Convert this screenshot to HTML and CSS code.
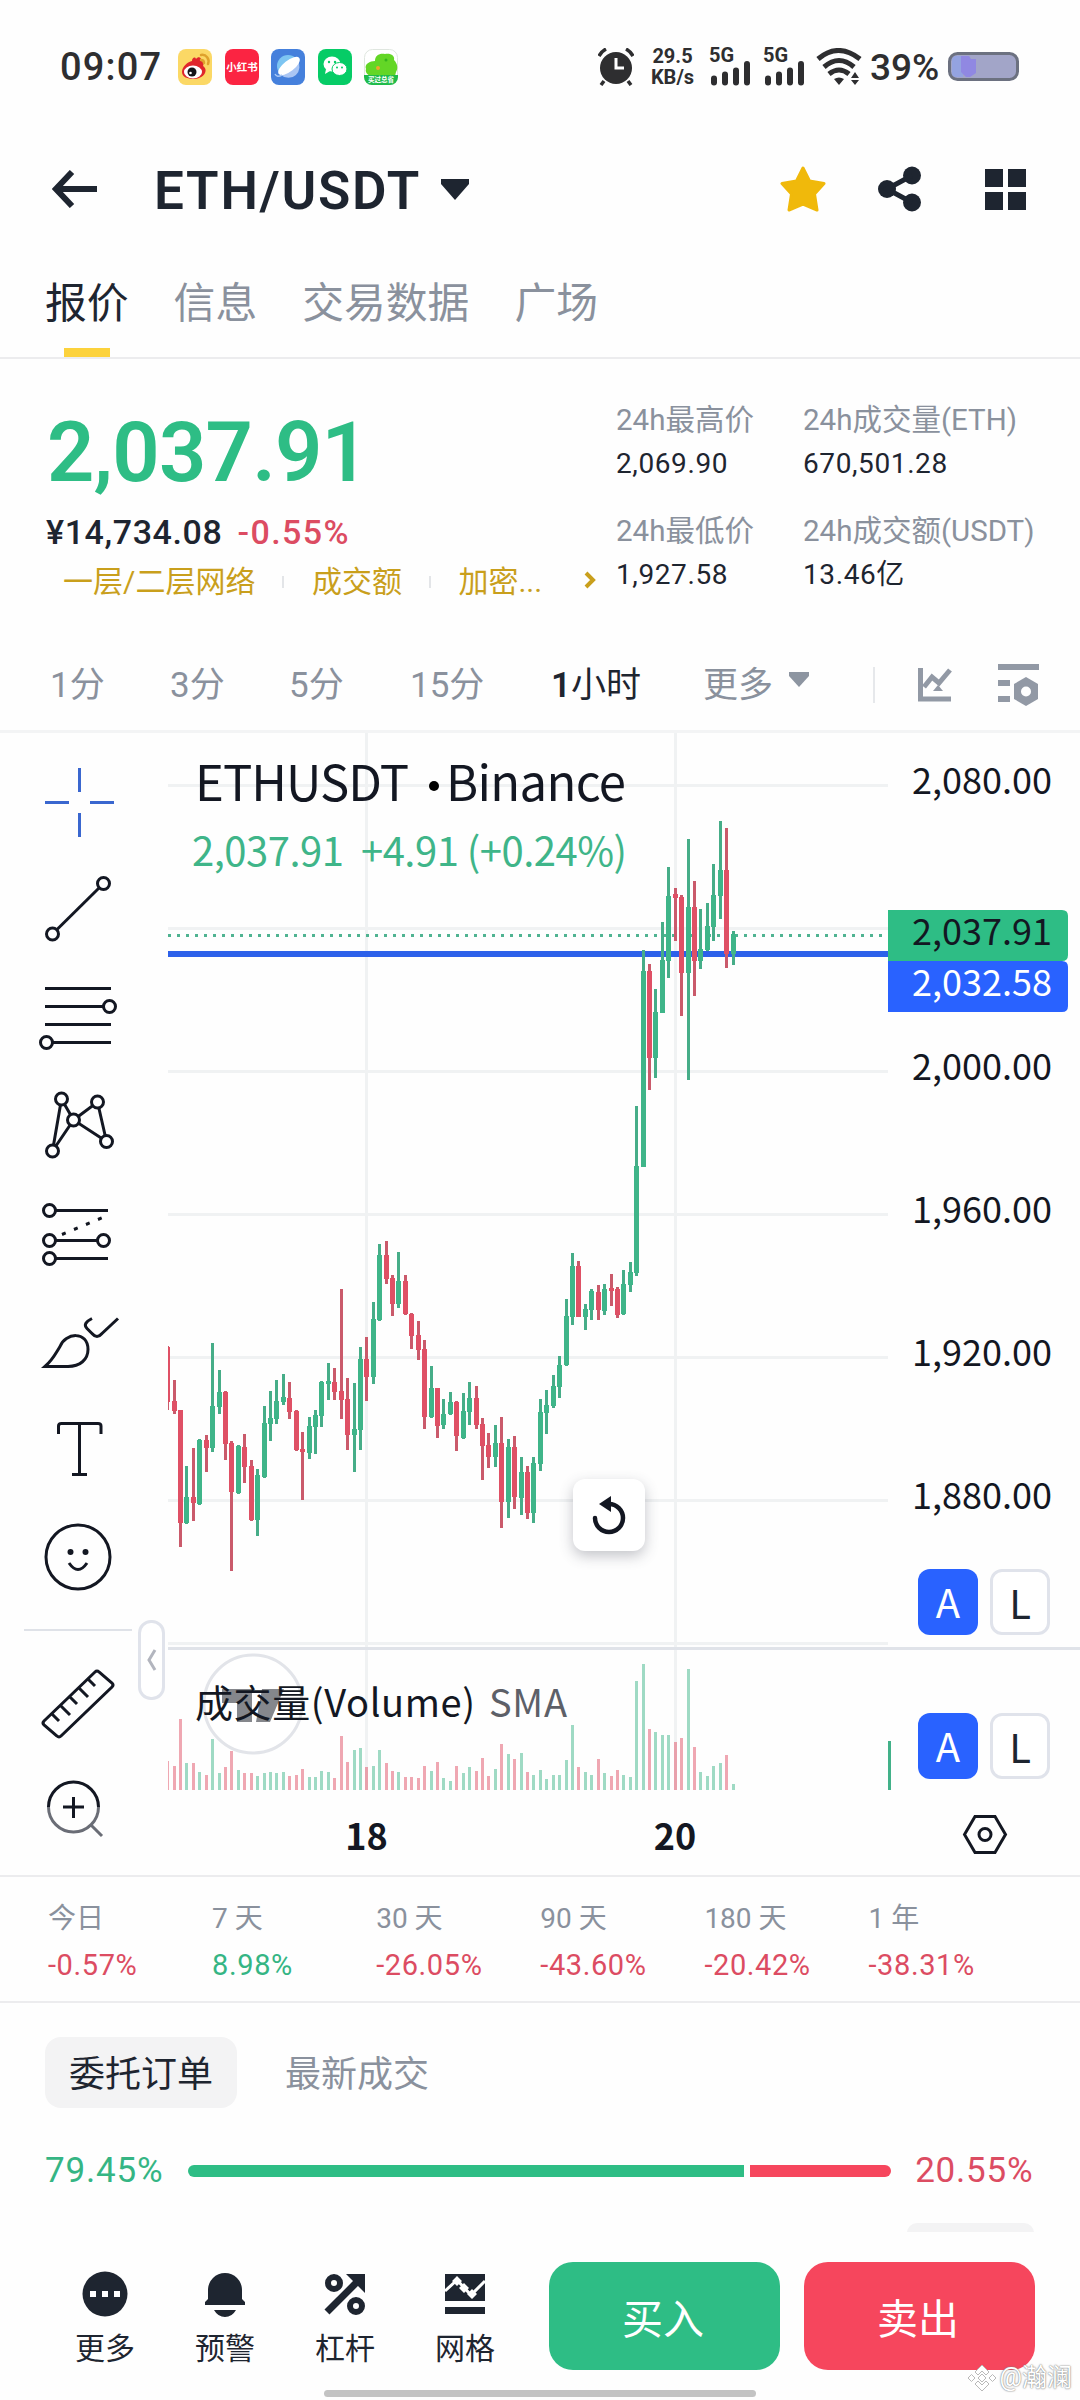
FILE: index.html
```html
<!DOCTYPE html>
<html lang="zh-CN">
  <head>
    <meta charset="UTF-8" />
    <meta name="viewport" content="width=device-width, initial-scale=1.0" />
    <title>ETH/USDT</title>
    <link rel="stylesheet" href="styles.css">
  </head>
  <body>
    <div class="status-bar">
      <span class="time">09:07</span>
      <div class="apps">
        <svg width="34" height="36" viewBox="0 0 34 36">
          <rect width="34" height="36" rx="8" fill="#fbd865" />
          <path d="M4 23c0-6 6-10 10-11 0-3 3-5 4-2 2-3 6-2 5 2 3 0 3 3 2 5 3 2 3 5 2 7-2 4-7 6-12 6S4 28 4 23z" fill="#e0262b" />
          <ellipse cx="15" cy="23" rx="9" ry="6.500" fill="#fff" />
          <circle cx="14" cy="23" r="4.500" fill="#16161a" />
          <circle cx="12.500" cy="24" r="1.300" fill="#fff" />
          <path d="M23 6c5-1 9 4 7 9M23 11c2 0 3 1 3 3" fill="none" stroke="#dfa22c" stroke-width="2.500" stroke-linecap="round" />
        </svg>
        <svg width="34" height="36" viewBox="0 0 34 36">
          <rect width="34" height="36" rx="8" fill="#fb2442" />
          <text x="17" y="22" class="app-text">小红书</text>
        </svg>
        <svg width="34" height="36" viewBox="0 0 34 36">
          <rect width="34" height="36" rx="8" fill="#4580dc" />
          <circle cx="17" cy="17" r="11" fill="#7dc5f2" />
          <path d="M26 11a11 11 0 0 1-16 15z" fill="#aac6f4" />
          <ellipse cx="18" cy="17" rx="13" ry="5.500" transform="rotate(-38 18 17)" fill="#fff" />
          <path d="M4 25q2 4 7 1" fill="none" stroke="#a9c8f5" stroke-width="1.500" />
        </svg>
        <svg width="34" height="36" viewBox="0 0 34 36">
          <rect width="34" height="36" rx="8" fill="#06cc66" />
          <ellipse cx="14" cy="15" rx="8.500" ry="7.500" fill="#fff" />
          <path d="M8 20l-1 5 5-3z" fill="#fff" />
          <ellipse cx="21.500" cy="20" rx="7.500" ry="6.500" fill="#fff" stroke="#06cc66" />
          <g fill="#06cc66">
            <circle cx="11" cy="13" r="1.200" />
            <circle cx="17" cy="13" r="1.200" />
            <circle cx="19" cy="18.500" r="1" />
            <circle cx="24" cy="18.500" r="1" />
          </g>
        </svg>
        <svg width="34" height="36" viewBox="0 0 34 36">
          <rect x=".5" y=".5" width="33" height="35" rx="8" fill="#fff" stroke="#dfe6df" />
          <path d="M2 20c-2-5 4-8 9-8 0-6 5-8 10-7 6-1 10 2 9 6 4 4 4 9 2 12l-1 4H6c-3-2-5-4-4-7z" fill="#63d626" />
          <path d="M0 26h34v2a8 8 0 0 1-8 8H8a8 8 0 0 1-8-8z" fill="#1fbb4a" />
          <circle cx="14" cy="19" r="2" fill="#f0a42e" />
          <circle cx="22" cy="11" r="1.500" fill="#35b51c" />
          <text x="17" y="33" class="app-text tiny">买过总省</text>
        </svg>
      </div>
      <svg class="alarm" width="36" height="38" viewBox="0 0 36 38">
        <circle cx="18" cy="20" r="16" fill="#2e2e30" />
        <path d="M18 10v10h8" fill="none" stroke="#fff" stroke-width="3" />
        <path d="M1 8q3-5 7-7M35 8q-3-5-7-7M6 33l-3 4M30 33l3 4" fill="none" stroke="#2e2e30" stroke-width="3.500" />
      </svg>
      <div class="speed"><b>29.5</b><b>KB/s</b></div>
      <div class="signal"><b>5G</b>
        <svg width="42" height="26" viewBox="0 0 42 26"><path d="M4 22.500v-4M15 22.500v-8M26 22.500v-12M37 22.500V4" stroke="#2e2e30" stroke-width="6" stroke-linecap="round" /></svg>
      </div>
      <div class="signal"><b>5G</b>
        <svg width="42" height="26" viewBox="0 0 42 26"><path d="M4 22.500v-4M15 22.500v-8M26 22.500v-12M37 22.500V4" stroke="#2e2e30" stroke-width="6" stroke-linecap="round" /></svg>
      </div>
      <svg class="wifi" width="46" height="38" viewBox="0 0 46 38">
        <path d="M2 11q20-17 42 0M8 19q15-13 30 0M13 26q10-8 20 0" fill="none" stroke="#2e2e30" stroke-width="5" />
        <path d="M18 31q5-3 10 0l-5 6zM35 30l4-6 4 6zM35 32h8l-4 5z" fill="#2e2e30" />
      </svg>
      <span class="percent">39%</span>
      <svg class="battery" width="71" height="30" viewBox="0 0 71 30">
        <rect x="1.500" y="1.500" width="68" height="26" rx="8" fill="#a2a5c8" stroke="#6c7180" stroke-width="3" />
        <path d="M4 7q1-3 4-3h7v21H8q-4 0-4-4z" fill="#94a3e0" />
        <path d="M13 4h8l2 3h5v14l-6 4h-4l-5-5z" fill="#9088e2" />
      </svg>
    </div>

    <header class="header">
      <svg class="back" width="46" height="38" viewBox="0 0 46 38">
        <path d="M20 2L4 19l16 17M4 19h41" fill="none" stroke="#1e2530" stroke-width="6" />
      </svg>
      <h1>ETH/USDT</h1>
      <svg class="caret" width="28" height="21" viewBox="0 0 28 21"><path d="M0 0h28v5L14 21 0 5z" fill="#1e2530" /></svg>
      <svg class="star" width="46" height="46" viewBox="0 0 46 46">
        <path d="M23 2l6.500 13L44 17.500 34.500 28 37 44l-14-6-14 6 2.500-16L2 17.500 16.500 15z" fill="#f0b90b" stroke="#f0b90b" stroke-width="3" stroke-linejoin="round" />
      </svg>
      <svg class="share" width="46" height="46" viewBox="0 0 46 46">
        <g fill="#1e2530"><circle cx="10" cy="23" r="9" /><circle cx="35" cy="9.500" r="9" /><circle cx="35" cy="36.500" r="9" /></g>
        <path d="M35 9.500L10 23l25 13.500" fill="none" stroke="#1e2530" stroke-width="5" />
      </svg>
      <svg width="41" height="41" viewBox="0 0 41 41"><path d="M0 0h18v18H0zM23 0h18v18H23zM0 23h18v18H0zM23 23h18v18H23z" fill="#1e2530" /></svg>
    </header>

    <nav class="tabs">
      <span class="active">报价</span>
      <span>信息</span>
      <span>交易数据</span>
      <span>广场</span>
    </nav>

    <section class="ticker">
      <div class="price-box">
        <div class="price">2,037.91</div>
        <div class="fiat"><span>¥14,734.08</span> <span class="down">-0.55%</span></div>
        <div class="tags">
          <span>一层/二层网络</span><i></i><span>成交额</span><i></i><span>加密...</span>
          <svg width="12" height="18" viewBox="0 0 12 18"><path d="M2 2l7 7-7 7" fill="none" stroke="#c99f1c" stroke-width="4" /></svg>
        </div>
      </div>
      <dl class="day-stats">
        <div><dt>24h最高价</dt><dd>2,069.90</dd></div>
        <div><dt>24h成交量(ETH)</dt><dd>670,501.28</dd></div>
        <div><dt>24h最低价</dt><dd>1,927.58</dd></div>
        <div><dt>24h成交额(USDT)</dt><dd>13.46亿</dd></div>
      </dl>
    </section>

    <nav class="frames">
      <span>1分</span>
      <span>3分</span>
      <span>5分</span>
      <span>15分</span>
      <span class="active"><b>1</b>小时</span>
      <span>更多 <svg width="20" height="15" viewBox="0 0 20 15"><path d="M0 0h20v4L10 15 0 4z" fill="#8d95a1" /></svg></span>
      <i></i>
      <svg width="34" height="34" viewBox="0 0 34 34">
        <path d="M2.500 0v31H33" fill="none" stroke="#9299a5" stroke-width="5" />
        <path d="M6 19l8-10 7 6L32 2" fill="none" stroke="#9299a5" stroke-width="5" />
        <path d="M15 23l5-6 5 6z" fill="#9299a5" />
      </svg>
      <svg width="42" height="44" viewBox="0 0 42 44">
        <path d="M0 4h41M0 20h12M0 36h12" stroke="#9299a5" stroke-width="6" />
        <path d="M28 14l12 7v15l-12 7-12-7V21z" fill="#9299a5" />
        <circle cx="28" cy="28.500" r="5" fill="#fff" />
      </svg>
    </nav>

    <main class="chart">
      <div class="tools">
        <svg viewBox="24 748 108 108"><path d="M79.500 768v24M79.500 813v24M45 802.500h24M90 802.500h24" /></svg>
        <svg viewBox="24 856 108 108"><path d="M57 929.500l42-41.500" /><circle cx="103.500" cy="883.500" r="6" /><circle cx="52.500" cy="934" r="6" /></svg>
        <svg viewBox="24 964 108 108"><path d="M45 988.500h66M45 1006.500h58M45 1024.500h66M52 1042.500h59" /><circle cx="109.500" cy="1006.500" r="6" /><circle cx="46.500" cy="1042.500" r="6" /></svg>
        <svg viewBox="24 1072 108 108">
          <path d="M61.500 1099l-9 52 21-31zM73.500 1120l24-18 9 39.500z" />
          <g fill="#fff"><circle cx="61.500" cy="1099" r="6" /><circle cx="97.500" cy="1102" r="6" /><circle cx="73.500" cy="1120" r="6" /><circle cx="106.500" cy="1141.500" r="6" /><circle cx="52.500" cy="1151" r="6" /></g>
        </svg>
        <svg viewBox="24 1180 108 108">
          <path d="M56 1210.500h52M56 1240.500h41M56 1258.500h52" /><path d="M62 1234.500l42-17.500" stroke-dasharray="4 9" />
          <circle cx="49.500" cy="1210.500" r="6" /><circle cx="49.500" cy="1240.500" r="6" /><circle cx="103.500" cy="1240.500" r="6" /><circle cx="49.500" cy="1258.500" r="6" />
        </svg>
        <svg viewBox="24 1288 108 108"><path d="M45 1366.500c8-7 10-12 15-20 5-14 28-16 28 3 0 10-8 17-20 17zM92 1318.500q-10 5-5 10l5 5q5 6 10 0l16-15" /></svg>
        <svg viewBox="24 1396 108 108"><path d="M58.500 1434v-8q0-2.500 3-2.500h36.500q3 0 3 2.500v8M79.500 1424v50.500M72 1474.500h15" /></svg>
        <svg viewBox="24 1504 108 108"><circle cx="78" cy="1557" r="32" /><path d="M69 1563q9 13 18 0" /><g fill="#131722" stroke="none"><circle cx="70.500" cy="1552" r="3" /><circle cx="85.500" cy="1552" r="3" /></g></svg>
        <hr>
        <svg viewBox="24 1650 108 108"><path d="M44 1721l51-49q2-2 4 0l13 11q2 2 0 4l-51 49q-2 2-4 0l-13-11q-2-2 0-4zM52 1714l7 7M61 1706l9 9M70 1697l7 7M79 1688l9 9M88 1679l7 7" /></svg>
        <svg viewBox="24 1758 108 108"><path d="M48.500 1807a25 25 0 0 1 50 0M63 1807h21M73.500 1797v21" /><path d="M48.500 1807a25 25 0 0 0 50 0M91 1825l11 11" stroke="#6a6d76" /></svg>
      </div>

      <div class="plot">
        <svg id="candles" width="912" height="1145" viewBox="168 730 912 1145">
          <g stroke="#f0f2f3" stroke-width="3">
            <path d="M168 785.500h720M168 928.500h720M168 1071.500h720M168 1214.500h720M168 1357.500h720M168 1500.500h720M168 1643.500h720" />
            <path d="M366.500 733v1057M675.500 733v1057" />
          </g>
          <circle cx="253" cy="1704" r="49" fill="#fff" fill-opacity=".6" stroke="#e2e4e9" stroke-width="3" />
          <path d="M222 1689h30v33h-15v-19h-15zM262 1689h22l-14 33h-14z" fill="#85878c" />
          <path d="M168 1648.500h912" stroke="#e0e3e9" stroke-width="3" />
          <path d="M168 935.500h720" stroke="#4fb391" stroke-width="3" stroke-dasharray="3 6" />
          <path d="M168 954h720" stroke="#2d61ea" stroke-width="6" />
          <g id="bars"></g>
          <path d="M889.500 1741v49" stroke="#42b189" stroke-width="3" />
          <path d="M888 910h174q6 0 6 6v39q0 6-6 6H888z" fill="#2ebd85" />
          <path d="M888 961h174q6 0 6 6v39q0 6-6 6H888z" fill="#2962ff" />
          <g class="axis">
            <text x="912" y="794">2,080.00</text>
            <text x="912" y="945">2,037.91</text>
            <text x="912" y="995.500" class="on-blue">2,032.58</text>
            <text x="912" y="1079.500">2,000.00</text>
            <text x="912" y="1222.500">1,960.00</text>
            <text x="912" y="1365.500">1,920.00</text>
            <text x="912" y="1508.500">1,880.00</text>
          </g>
          <g class="legend">
            <text x="195" y="801" textLength="214">ETHUSDT</text>
            <circle cx="434" cy="786" r="5" />
            <text x="446" y="801" textLength="180">Binance</text>
            <text x="192" y="866" class="change" textLength="152">2,037.91</text>
            <text x="361" y="866" class="change" textLength="266">+4.91 (+0.24%)</text>
            <text x="195" y="1717" class="volume" textLength="280">成交量(Volume)</text>
            <text x="489" y="1717" class="volume sma" textLength="78">SMA</text>
          </g>
          <g class="dates">
            <text x="366.500" y="1850">18</text>
            <text x="675" y="1850">20</text>
          </g>
          <path d="M975 1816.500h20l10.500 18-10.500 18h-20l-10.500-18z" fill="none" stroke="#131722" stroke-width="3" />
          <circle cx="985" cy="1834.500" r="6" fill="none" stroke="#131722" stroke-width="3" />
        </svg>
        <div class="scale-mode price-scale"><b>A</b><span>L</span></div>
        <div class="scale-mode volume-scale"><b>A</b><span>L</span></div>
        <div class="reset">
          <svg width="36" height="40" viewBox="0 0 36 40">
            <path d="M4 22a14 14 0 1 0 14-14" fill="none" stroke="#131722" stroke-width="4.500" stroke-linecap="round" />
            <path d="M8 8L20 0v16z" fill="#131722" />
          </svg>
        </div>
        <div class="collapse"><svg width="10" height="22" viewBox="0 0 10 22"><path d="M8 1L2 11l6 10" fill="none" stroke="#b2b5be" stroke-width="3" /></svg></div>
      </div>
    </main>

    <section class="periods">
      <div><span>今日</span><b class="down">-0.57%</b></div>
      <div><span>7 天</span><b class="up">8.98%</b></div>
      <div><span>30 天</span><b class="down">-26.05%</b></div>
      <div><span>90 天</span><b class="down">-43.60%</b></div>
      <div><span>180 天</span><b class="down">-20.42%</b></div>
      <div><span>1 年</span><b class="down">-38.31%</b></div>
    </section>

    <section class="orders">
      <div class="order-tabs">
        <span class="active">委托订单</span>
        <span>最新成交</span>
      </div>
      <div class="ratio">
        <span class="up">79.45%</span>
        <div class="ratio-bar"><i class="buy" style="width: 556px"></i><i class="sell"></i></div>
        <span class="down">20.55%</span>
      </div>
      <div class="precision"></div>
    </section>

    <footer class="bottom-bar">
      <div class="action">
        <svg width="46" height="46" viewBox="0 0 46 46"><circle cx="23" cy="23" r="22.500" fill="#1e2530" /><path d="M8 20h6v6H8zM20 20h6v6h-6zM32 20h6v6h-6z" fill="#fff" /></svg>
        <span>更多</span>
      </div>
      <div class="action">
        <svg width="46" height="46" viewBox="0 0 46 46"><path d="M6 19a17 17 0 0 1 34 0v9l3 3v3H3v-3l3-3zM12 39h22q-4 7-11 7t-11-7z" fill="#1e2530" /></svg>
        <span>预警</span>
      </div>
      <div class="action">
        <svg width="46" height="46" viewBox="0 0 46 46">
          <g fill="none" stroke="#1e2530" stroke-width="6"><circle cx="12" cy="12" r="6" /><circle cx="34" cy="35" r="6" /><path d="M5 41L36 10" stroke-width="7" /></g>
          <path d="M24 3h19v19z" fill="#1e2530" />
        </svg>
        <span>杠杆</span>
      </div>
      <div class="action">
        <svg width="46" height="46" viewBox="0 0 46 46">
          <path d="M3 3h40v27H3zM3 36h40v7H3z" fill="#1e2530" />
          <path d="M3 20L15 9l14 15L43 10" fill="none" stroke="#fff" stroke-width="3" />
          <path d="M15 5l5 5-5 5-5-5zM22 12l5 5-5 5-5-5zM30 18l5 5-5 5-5-5z" fill="#fff" />
        </svg>
        <span>网格</span>
      </div>
      <button class="buy">买入</button>
      <button class="sell">卖出</button>
      <div class="home-indicator"></div>
    </footer>
    <div class="watermark">
      <svg width="28" height="28" viewBox="0 0 28 28"><path d="M14 1l7 7-3 3-4-4-4 4-3-3zM14 27l-7-7 3-3 4 4 4-4 3 3zM14 10l4 4-4 4-4-4zM3.500 10.500L7 14l-3.500 3.500L0 14zM24.500 10.500L28 14l-3.500 3.500L21 14z" fill="#fff" stroke="#b9b9b9" /></svg>
      <span>@瀚澜</span>
    </div>

    <script>
      // [high, body top, body bottom, low, volume, rising]
      const candles = [
        [408, 412, 575, 600, 88, 0], [510, 573, 603, 613, 73, 0], [600, 600, 940, 1010, 214, 0],
        [768, 860, 940, 942, 80, 1], [714, 860, 878, 932, 80, 0], [687, 690, 882, 885, 55, 1],
        [675, 690, 713, 785, 46, 0], [399, 588, 713, 725, 153, 1], [480, 545, 590, 613, 52, 1],
        [543, 545, 703, 750, 68, 0], [693, 698, 846, 1082, 118, 0], [705, 708, 848, 851, 61, 1],
        [672, 710, 770, 818, 50, 0], [750, 767, 930, 933, 52, 0], [777, 795, 930, 977, 43, 1],
        [588, 638, 800, 803, 50, 1], [543, 624, 641, 692, 55, 1], [510, 572, 627, 641, 50, 1],
        [492, 561, 576, 584, 55, 1], [516, 563, 605, 627, 43, 0], [600, 602, 720, 722, 46, 0],
        [666, 716, 725, 870, 64, 0], [621, 648, 730, 746, 40, 1], [600, 614, 650, 731, 40, 1],
        [513, 516, 617, 650, 58, 1], [459, 514, 521, 570, 55, 1], [474, 516, 546, 570, 37, 0],
        [237, 542, 570, 627, 161, 0], [504, 567, 674, 720, 85, 0], [519, 657, 675, 785, 121, 1],
        [410, 447, 660, 720, 125, 1], [381, 447, 500, 573, 68, 0], [276, 327, 500, 521, 71, 1],
        [102, 135, 330, 333, 121, 1], [93, 135, 207, 222, 80, 0], [195, 204, 282, 318, 58, 0],
        [126, 212, 282, 293, 55, 1], [195, 212, 312, 315, 40, 0], [309, 312, 378, 417, 40, 0],
        [333, 375, 420, 450, 37, 0], [390, 416, 620, 657, 71, 0], [468, 534, 620, 623, 58, 1],
        [533, 535, 648, 684, 85, 0], [567, 612, 645, 657, 37, 1], [546, 576, 612, 614, 28, 1],
        [573, 576, 678, 722, 71, 0], [548, 604, 683, 687, 52, 1], [516, 564, 606, 645, 68, 1],
        [528, 564, 645, 657, 58, 0], [624, 642, 708, 810, 97, 0], [669, 704, 741, 774, 43, 0],
        [645, 699, 741, 770, 64, 1], [621, 699, 876, 954, 139, 0], [687, 710, 876, 923, 107, 1],
        [678, 710, 862, 897, 94, 0], [741, 786, 863, 914, 110, 1], [768, 785, 908, 926, 55, 0],
        [741, 759, 908, 938, 46, 1], [567, 605, 762, 782, 61, 1], [540, 585, 608, 671, 34, 1],
        [495, 528, 588, 593, 46, 1], [438, 465, 530, 564, 46, 1], [267, 318, 466, 468, 91, 1],
        [129, 168, 320, 345, 195, 1], [153, 168, 320, 321, 68, 0], [282, 296, 320, 360, 55, 1],
        [237, 242, 299, 329, 46, 1], [225, 246, 300, 329, 94, 0], [222, 237, 303, 315, 52, 1],
        [192, 234, 243, 288, 43, 0], [231, 238, 315, 323, 61, 0], [180, 222, 312, 315, 46, 1],
        [156, 186, 224, 246, 40, 1], [-312, -132, 190, 198, 328, 1], [-780, -717, -130, -130, 379, 1],
        [-738, -717, -457, -360, 184, 0], [-663, -593, -457, -396, 175, 1], [-864, -750, -592, -591, 166, 1],
        [-1029, -942, -747, -697, 164, 1], [-966, -947, -936, -807, 145, 0], [-945, -938, -711, -582, 157, 0],
        [-1113, -909, -711, -390, 364, 1], [-987, -909, -747, -642, 130, 0], [-903, -783, -747, -723, 55, 1],
        [-921, -851, -780, -776, 43, 1], [-1038, -945, -848, -807, 71, 1], [-1168, -1020, -942, -873, 82, 1],
        [-1146, -1020, -768, -726, 104, 0], [-837, -827, -768, -735, 19, 1]
      ]

      const y = v => Math.round(1210 + v / 3)
      let svg = ""

      candles.forEach(function ([high, top, bottom, low, volume, rising], i) {
        // keep every bar on whole pixels
        const x = Math.max(Math.floor(174.1 + (i - 1) * 6.425), 167)
        const color = rising ? "#3fb589" : "#df5065"
        const wick = rising ? "#46ad88" : "#ca5a6b"
        const height = Math.round(volume / 3)
        svg += `<rect x="${x - 1}" y="${y(high)}" width="3" height="${y(low) - y(high)}" fill="${wick}"/>`
        svg += `<rect x="${x - 2}" y="${y(top)}" width="5" height="${y(bottom) - y(top)}" fill="${color}"/>`
        svg += `<rect x="${x - 1}" y="${1790 - height}" width="3" height="${height}" fill="${color}" opacity=".5"/>`
      })

      document.getElementById("bars").innerHTML = svg
    </script>
  </body>
</html>
```
FILE: styles.css
```css
* {
  box-sizing: border-box;
}

body {
  margin: 0;
  width: 1080px;
  height: 2400px;
  background: #fefefe;
  color: #1e2530;
  font-family: Roboto, "Noto Sans CJK SC", sans-serif;
  position: relative;
  overflow: hidden;
}

svg {
  display: block;
  flex: none;
}

.up {
  color: #35b584;
}

.down {
  color: #dc4c62;
}

/* status bar */
.status-bar {
  height: 132px;
  padding: 2px 0 0 60px;
  display: flex;
  align-items: center;
  color: #2e2e30;
}

.time {
  width: 118px;
  font-size: 38px;
  font-weight: 500;
  letter-spacing: 1.2px;
}

.apps {
  display: flex;
  gap: 12.5px;
  width: 420px;
}

.app-text {
  font-size: 10.5px;
  font-weight: 700;
  fill: #fff;
  text-anchor: middle;
}

.app-text.tiny {
  font-size: 6.5px;
}

.speed {
  width: 45px;
  margin-left: 16px;
  display: flex;
  flex-direction: column;
  align-items: center;
  font-size: 20px;
  line-height: 21px;
}

.signal {
  width: 42px;
  height: 38px;
  margin-left: 12px;
  position: relative;
  font-size: 20px;
  line-height: 17px;
}

.signal:nth-of-type(3) {
  margin-left: 14px;
}

.signal svg {
  position: absolute;
  left: 1px;
  bottom: 0;
}

.signal b {
  display: block;
  margin-top: -1px;
}

.wifi {
  margin-left: 11px;
}

.percent {
  width: 86px;
  padding-left: 8px;
  font-size: 37px;
  font-weight: 500;
}

/* header */
.header {
  height: 116px;
  padding: 0 54px 2px 52px;
  display: flex;
  align-items: center;
}

.header h1 {
  margin: 4px 22px 0 56px;
  width: 265px;
  font-size: 53px;
  font-weight: 600;
  line-height: 60px;
  letter-spacing: 1.7px;
  white-space: nowrap;
}

.star {
  margin-left: auto;
}

.share {
  margin: 0 62px 0 51px;
}

/* tabs */
.tabs {
  height: 111px;
  padding-left: 45px;
  display: flex;
  gap: 45px;
  border-bottom: 2px solid #ececee;
  font-size: 41.8px;
  line-height: 111px;
  color: #8a919d;
}

.tabs .active {
  color: #1e2530;
  position: relative;
}

.tabs .active::after {
  content: "";
  position: absolute;
  left: 19px;
  bottom: 0;
  width: 46px;
  height: 9px;
  background: #fcd23c;
}

/* ticker */
.ticker {
  height: 281px;
  display: flex;
}

.price-box {
  width: 616px;
  padding-left: 46px;
}

.price {
  margin-top: 49px;
  padding-left: 1px;
  font-size: 83px;
  font-weight: 600;
  line-height: 90px;
  letter-spacing: -0.8px;
  color: #2ebd85;
}

.fiat {
  margin-top: 14px;
  font-size: 34px;
  font-weight: 500;
  line-height: 40px;
  letter-spacing: 0.6px;
}

.fiat .down {
  margin-left: 6px;
  letter-spacing: 1.4px;
}

.tags {
  margin-top: 4px;
  padding-left: 17px;
  display: flex;
  align-items: center;
  font-size: 30px;
  line-height: 52px;
  color: #c99f1c;
}

.tags i {
  width: 2px;
  height: 12px;
  margin: 0 27.5px 0 27px;
  background: #e3e5e8;
}

.tags svg {
  margin: -4px 0 0 42px;
}

.day-stats {
  margin: 37px 0 0;
  display: grid;
  grid-template-columns: 187px 260px;
  grid-auto-rows: 111px;
  align-content: start;
}

.day-stats dt {
  font-size: 29.5px;
  line-height: 48px;
  color: #8a919d;
  white-space: nowrap;
}

.day-stats dd {
  margin: 0;
  font-size: 28px;
  line-height: 39px;
  letter-spacing: 0.6px;
}

/* time frames */
.frames {
  height: 90px;
  padding-left: 50px;
  display: grid;
  grid-template-columns: 120px 119px 121px 141px 152px 170px 45px 80px 42px;
  align-items: center;
  font-size: 35px;
  color: #8a919d;
}

.frames span {
  line-height: 50px;
  margin-top: 1px;
}

.frames .active {
  color: #1e2530;
}

.frames b {
  font-weight: 600;
}

.frames span svg {
  display: inline-block;
  margin: 0 0 10px 7px;
}

.frames i {
  width: 2px;
  height: 36px;
  background: #e6e8eb;
}

/* chart */
.chart {
  height: 1145px;
  display: flex;
  border-top: 3px solid #f3f4f5;
  font-family: "Noto Sans CJK SC", sans-serif;
}

.tools {
  width: 168px;
  padding: 15px 0 0 24px;
}

.tools svg {
  width: 108px;
  height: 108px;
  fill: none;
  stroke: #131722;
  stroke-width: 3;
}

.tools svg:first-child {
  stroke: #3a67cf;
}

.tools hr {
  width: 108px;
  height: 2px;
  margin: 17px 0 19px;
  border: 0;
  background: #dfe2e8;
}

.plot {
  position: relative;
  margin-top: -3px;
}

.axis text {
  font-size: 36px;
  fill: #131722;
}

.axis .on-blue {
  fill: #fff;
}

.legend text {
  font-size: 49px;
  fill: #131722;
}

.legend .change {
  font-size: 40px;
  fill: #3fb589;
}

.legend .volume {
  font-size: 38px;
}

.legend .sma {
  fill: #5d6068;
}

.dates text {
  font-size: 36px;
  font-weight: 700;
  text-anchor: middle;
  fill: #131722;
}

.scale-mode {
  position: absolute;
  left: 750px;
  display: flex;
  gap: 12px;
  font-size: 40px;
  line-height: 64px;
  text-align: center;
}

.price-scale {
  top: 839px;
}

.volume-scale {
  top: 983px;
}

.scale-mode b,
.scale-mode span {
  width: 60px;
  height: 66px;
  border-radius: 12px;
  font-weight: 400;
}

.scale-mode b {
  background: #2962ff;
  color: #fff;
}

.scale-mode span {
  border: 3px solid #e0e3eb;
  line-height: 60px;
  background: #fff;
}

.reset {
  position: absolute;
  left: 405px;
  top: 749px;
  width: 72px;
  height: 72px;
  padding: 17px 0 0 18px;
  border-radius: 12px;
  background: #fff;
  box-shadow: 0 5px 14px rgba(60, 64, 80, 0.3);
}

.collapse {
  position: absolute;
  left: -30px;
  top: 890px;
  width: 27px;
  height: 80px;
  display: flex;
  align-items: center;
  justify-content: center;
  border: 3px solid #e0e3eb;
  border-radius: 13px;
  background: #fff;
}

/* period changes */
.periods {
  height: 128px;
  padding: 19px 0 0 48px;
  display: grid;
  grid-template-columns: repeat(6, 164.1px);
  border-top: 2px solid #ececee;
  border-bottom: 2px solid #ececee;
  line-height: 46px;
}

.periods span {
  display: block;
  font-size: 28px;
  color: #8a919d;
}

.periods b {
  font-size: 29px;
  font-weight: 400;
  letter-spacing: 0.6px;
}

/* order book */
.orders {
  height: 229px;
  padding: 34px 46px 0 45px;
  position: relative;
  overflow: hidden;
}

.order-tabs {
  height: 71px;
  display: flex;
  gap: 24px;
  font-size: 36px;
  line-height: 76px;
  color: #8a919d;
}

.order-tabs span {
  padding: 0 24px;
}

.order-tabs .active {
  border-radius: 16px;
  background: #f3f3f4;
  color: #1e2530;
}

.ratio {
  margin-top: 41px;
  display: flex;
  align-items: center;
  font-size: 35px;
  line-height: 42px;
  letter-spacing: 0.8px;
}

.ratio span {
  width: 143px;
  padding-top: 1px;
}

.ratio .down {
  padding-left: 24px;
}

.ratio-bar {
  width: 704px;
  height: 12px;
  display: flex;
  gap: 6px;
}

.ratio-bar .buy {
  border-radius: 6px 0 0 6px;
  background: #2ebd85;
}

.ratio-bar .sell {
  flex: 1;
  border-radius: 0 6px 6px 0;
  background: #f6465d;
}

.precision {
  width: 127px;
  height: 40px;
  margin: 31px 0 0 862px;
  border-radius: 10px;
  background: #f3f3f4;
}

/* bottom bar */
.bottom-bar {
  height: 168px;
  padding: 30px 0 0 45px;
  display: flex;
  position: relative;
  background: #fefefe;
}

.action {
  width: 120px;
  padding-top: 9px;
  display: flex;
  flex-direction: column;
  align-items: center;
  font-size: 30px;
  line-height: 63px;
}

.bottom-bar button {
  width: 231px;
  height: 108px;
  margin-left: 24px;
  padding: 0 3px 0 0;
  border: 0;
  border-radius: 24px;
  color: #fff;
  font: 41px Roboto, "Noto Sans CJK SC", sans-serif;
}

.bottom-bar .buy {
  background: #2ebd85;
}

.bottom-bar .sell {
  background: #f6465d;
}

.home-indicator {
  position: absolute;
  left: 324px;
  bottom: 3px;
  width: 432px;
  height: 7px;
  border-radius: 4px;
  background: #c3c3c3;
}

.watermark {
  position: absolute;
  right: 8px;
  bottom: 4px;
  display: flex;
  align-items: center;
  gap: 4px;
  font-size: 25px;
  line-height: 36px;
  color: #fff;
  text-shadow: 0 0 2px #777, 0 0 1px #999;
}
```
